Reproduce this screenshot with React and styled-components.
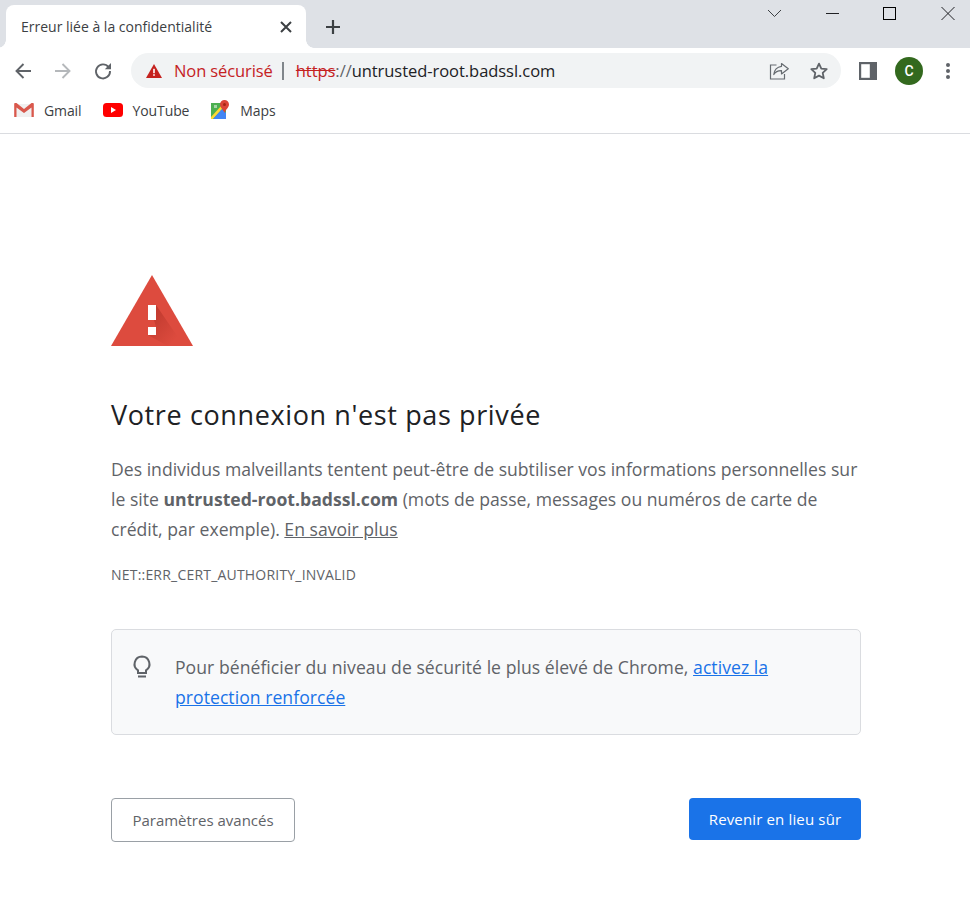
import React from "react";
import styled, { createGlobalStyle } from "styled-components";

const Global = createGlobalStyle`
  html, body { margin: 0; padding: 0; background: #fff; }
  body { font-family: "Open Sans", "Noto Sans", sans-serif; width: 970px; height: 916px; overflow: hidden; }
  * { box-sizing: border-box; }
`;

const Page = styled.div`display: flex; flex-direction: column; width: 970px; height: 916px; background: #fff;`;
const TabStrip = styled.div`display: flex; align-items: flex-end; height: 48px; padding-left: 6px; background: #dee1e6;`;
const Tab = styled.div`
  position: relative; display: flex; align-items: center; justify-content: space-between;
  width: 300px; height: 43px; padding: 0 14px 0 15px; background: #fff; border-radius: 8px 8px 0 0;
  &::before, &::after { content: ""; position: absolute; bottom: 0; width: 8px; height: 8px; background: radial-gradient(circle at var(--cx) 0, #dee1e6 7.5px, #fff 8px); }
  &::before { left: -8px; --cx: 0; }
  &::after { right: -8px; --cx: 100%; }
`;
const TabTitle = styled.span`font-size: 14px; color: #3c4043; white-space: nowrap;`;
const NewTab = styled.div`display: flex; margin: 0 0 11px 17px; width: 20px; height: 20px;`;
const WindowControls = styled.div`display: flex; align-self: flex-start; align-items: center; justify-content: flex-end; gap: 44px; margin-left: auto; padding: 6px 15px 0 0; height: 20px;`;
const Toolbar = styled.div`display: flex; align-items: center; height: 45px; padding-left: 13px; background: #fff;`;
const NavButtons = styled.div`display: flex; align-items: center; gap: 20px; width: 118px;`;
const Omnibox = styled.div`display: flex; align-items: center; width: 710px; height: 35px; padding: 0 12px 0 15px; background: #f1f3f4; border-radius: 18px;`;
const SecurityLabel = styled.span`margin-left: 12px; font-size: 16.5px; letter-spacing: -0.1px; color: #c5221f; white-space: nowrap;`;
const Divider = styled.span`width: 2px; height: 18px; margin: 0 12px 0 9px; background: #80868b;`;
const Url = styled.span`font-size: 16.5px; letter-spacing: -0.05px; color: #202124; white-space: nowrap;`;
const Scheme = styled.span`color: #c5221f; text-decoration: line-through;`;
const Separator = styled.span`color: #5f6368;`;
const OmniActions = styled.div`display: flex; align-items: center; gap: 20px; margin-left: auto;`;
const ToolActions = styled.div`display: flex; align-items: center; margin-left: 18px;`;
const Avatar = styled.div`display: flex; align-items: center; justify-content: center; width: 28px; height: 28px; margin: 0 22px 0 18px; border-radius: 50%; background: #33691e; color: #fff; font: 500 14px Roboto, sans-serif;`;
const BookmarkBar = styled.div`display: flex; align-items: center; gap: 21px; height: 41px; padding: 0 0 6px 14px; background: #fff; border-bottom: 1px solid #dadce0;`;
const Bookmark = styled.div`display: flex; align-items: center; gap: 10px; font-size: 14px; letter-spacing: -0.1px; color: #3c4043;`;
const Main = styled.main`display: flex; flex-direction: column; padding: 141px 109px 0 111px;`;
const Heading = styled.h1`margin: 47px 0 0; font-size: 27px; line-height: 44px; font-weight: 400; letter-spacing: 0.62px; color: #202124; white-space: nowrap;`;
const Paragraph = styled.p`margin: 17px 0 0; font-size: 17.6px; line-height: 30px; color: #5f6368; letter-spacing: 0.01px;`;
const Strong = styled.strong`font-weight: 700;`;
const LearnMore = styled.a`color: #5f6368; text-decoration: underline;`;
const ErrorCode = styled.div`margin-top: 19px; font-size: 14px; line-height: 24px; color: #5f6368; letter-spacing: 0.2px;`;
const Tip = styled.div`display: flex; gap: 23px; margin-top: 42px; height: 106px; padding: 22px 20px 0 20px; background: #f8f9fa; border: 1px solid #dadce0; border-radius: 5px;`;
const TipText = styled.div`font-size: 17.6px; line-height: 30px; color: #5f6368; letter-spacing: 0.04px;`;
const TipLink = styled.a`color: #1a73e8; text-decoration: underline;`;
const Buttons = styled.div`display: flex; justify-content: space-between; align-items: flex-start; margin-top: 63px;`;
const SecondaryButton = styled.button`width: 184px; height: 44px; padding: 0; background: #fff; border: 1px solid #9aa0a6; border-radius: 4px; color: #5f6368; font: 400 15px "Open Sans", sans-serif;`;
const PrimaryButton = styled.button`width: 172px; height: 42px; padding: 0; background: #1a73e8; border: 0; border-radius: 4px; color: #fff; letter-spacing: 0.15px; font: 500 15px "Open Sans", sans-serif;`;

const Svg = styled.svg`display: block; flex: none;`;
const BulbSvg = styled(Svg)`margin-top: 2px;`;

const Close = () => (<Svg width="12" height="12" viewBox="0 0 12 12"><path d="M1 1l10 10M11 1L1 11" stroke="#3c4043" strokeWidth="2" /></Svg>);
const Plus = () => (<Svg width="20" height="20" viewBox="0 0 20 20"><path d="M10 3v14M3 10h14" stroke="#3c4043" strokeWidth="2.2" /></Svg>);
const Chevron = () => (<Svg width="16" height="10" viewBox="0 0 16 10"><path d="M3 2l6.500 6.500L16 2" fill="none" stroke="#3c4043" strokeWidth="1" /></Svg>);
const Minimize = () => (<Svg width="14" height="14" viewBox="0 0 14 14"><path d="M1 7.500h13" stroke="#202124" strokeWidth="1" /></Svg>);
const Maximize = () => (<Svg width="14" height="14" viewBox="0 0 14 14"><rect x="0.500" y="1.500" width="12" height="12" fill="none" stroke="#000" strokeWidth="1" /></Svg>);
const CloseWin = () => (<Svg width="14" height="14" viewBox="0 0 14 14"><path d="M.5 1l13 13M13.500 1L.5 14" stroke="#202124" strokeWidth="1" /></Svg>);
const Back = ({ color }) => (<Svg width="20" height="20" viewBox="0 0 20 20"><path d="M18 10H4M10.500 3L3.500 10l7 7" fill="none" stroke={color} strokeWidth="1.900" /></Svg>);
const Forward = ({ color }) => (<Svg width="20" height="20" viewBox="0 0 20 20"><path d="M2 10h14M9.500 3l7 7-7 7" fill="none" stroke={color} strokeWidth="1.900" /></Svg>);
const Reload = () => (<Svg width="20" height="20" viewBox="0 0 20 20"><path d="M15.600 6.200A7 7 0 1 0 17 10" fill="none" stroke="#5f6368" strokeWidth="1.900" /><path d="M18 2v6.200h-6.200z" fill="#5f6368" /></Svg>);
const WarnSmall = () => (<Svg width="16" height="14" viewBox="0 0 16 14"><path d="M8 0l8 14H0z" fill="#c5221f" /><rect x="7.200" y="4.800" width="1.600" height="4.400" fill="#fff" /><rect x="7.200" y="10.200" width="1.600" height="1.600" fill="#fff" /></Svg>);
const Share = () => (<Svg width="20" height="20" viewBox="0 0 20 20"><path d="M7.500 4H1.500v14h14v-5" fill="none" stroke="#666b70" strokeWidth="1.200" /><path d="M12.500 2.500l6.800 5.200-6.800 5.200V9.700C9 9.600 6.400 10.800 4.800 13.500 5.200 9.300 8 5.700 12.500 5.300z" fill="none" stroke="#666b70" strokeWidth="1.200" strokeLinejoin="round" /></Svg>);
const Star = () => (<Svg width="20" height="20" viewBox="0 0 20 20"><path d="M10 2.600l2.300 5 5.400.6-4 3.700 1.100 5.400L10 14.600l-4.800 2.700 1.100-5.400-4-3.700 5.400-.6z" fill="none" stroke="#5f6368" strokeWidth="1.800" strokeLinejoin="round" /></Svg>);
const SidePanel = () => (<Svg width="18" height="18" viewBox="0 0 18 18"><rect width="18" height="18" fill="#5f6368" /><rect x="2.200" y="2.200" width="8.600" height="13.600" fill="#fff" /></Svg>);
const Dots = () => (<Svg width="6" height="18" viewBox="0 0 6 18"><circle cx="3" cy="3" r="2" fill="#5f6368" /><circle cx="3" cy="9" r="2" fill="#5f6368" /><circle cx="3" cy="15" r="2" fill="#5f6368" /></Svg>);
const Gmail = () => (<Svg width="20" height="16" viewBox="0 0 20 16"><path d="M1 2h18v13H1z" fill="#f0f0f0" /><path d="M1 2l9 7 9-7v2l-9 7-9-7z" fill="#dedede" /><path d="M1 1h1.500L10 7l7.500-6H19q.8 0 .8 1V15h-2.300V5.500L10 11 2.500 5.500V15H.2V2q0-1 .8-1z" fill="#d9584c" /></Svg>);
const YouTube = () => (<Svg width="20" height="14" viewBox="0 0 20 14"><rect width="20" height="14" rx="3.500" fill="#ff0000" /><path d="M8 4l5 3-5 3z" fill="#fff" /></Svg>);
const Maps = () => (
  <Svg width="20" height="20" viewBox="0 0 20 20">
    <path d="M1 3h15v16H1z" fill="#4caf50" />
    <path d="M1 17L12 5l2 2L3 19H1z" fill="#fdd835" />
    <path d="M3 19L12 9l4 4v6z" fill="#4285f4" />
    <path d="M4 5h3v3H4z" fill="#a5d6a7" />
    <path d="M14.500 0a4.500 4.500 0 0 1 4.500 4.500c0 3-3 4.500-4.500 8.500-1.500-4-4.500-5.500-4.500-8.500A4.500 4.500 0 0 1 14.500 0z" fill="#db4437" />
    <circle cx="14.500" cy="4.500" r="1.500" fill="#a52714" />
  </Svg>
);
const WarnLarge = () => (
  <Svg width="82" height="71" viewBox="0 0 82 71">
    <defs>
      <linearGradient id="warnShade" x1="0.1" y1="0.1" x2="0.8" y2="0.8">
        <stop offset="0" stopColor="#a52a20" stopOpacity=".55" />
        <stop offset="1" stopColor="#a52a20" stopOpacity="0" />
      </linearGradient>
    </defs>
    <path d="M41 0l41 71H0z" fill="#dd4b3e" />
    <path d="M45 30l28 41H57L37 60l8-8-2-7z" fill="url(#warnShade)" />
    <rect x="37" y="30" width="8" height="15" fill="#fff" />
    <rect x="37" y="52" width="8" height="8" fill="#fff" />
  </Svg>
);
const Bulb = () => (<BulbSvg width="20" height="26" viewBox="0 0 20 26"><path d="M10 2.500a7.500 7.500 0 0 0-4 13.800V19h8v-2.700a7.500 7.500 0 0 0-4-13.800z" fill="none" stroke="#5f6368" strokeWidth="2" /><rect x="6" y="21.500" width="8" height="2" fill="#5f6368" /></BulbSvg>);

export default function App() {
  return (
    <Page>
      <Global />
      <TabStrip>
        <Tab>
          <TabTitle>Erreur liée à la confidentialité</TabTitle>
          <Close />
        </Tab>
        <NewTab><Plus /></NewTab>
        <WindowControls><Chevron /><Minimize /><Maximize /><CloseWin /></WindowControls>
      </TabStrip>
      <Toolbar>
        <NavButtons>
          <Back color="#5f6368" />
          <Forward color="#b5b8bb" />
          <Reload />
        </NavButtons>
        <Omnibox>
          <WarnSmall />
          <SecurityLabel>Non sécurisé</SecurityLabel>
          <Divider />
          <Url><Scheme>https</Scheme><Separator>://</Separator>untrusted-root.badssl.com</Url>
          <OmniActions><Share /><Star /></OmniActions>
        </Omnibox>
        <ToolActions>
          <SidePanel />
          <Avatar>C</Avatar>
          <Dots />
        </ToolActions>
      </Toolbar>
      <BookmarkBar>
        <Bookmark><Gmail />Gmail</Bookmark>
        <Bookmark><YouTube />YouTube</Bookmark>
        <Bookmark><Maps />Maps</Bookmark>
      </BookmarkBar>
      <Main>
        <WarnLarge />
        <Heading>Votre connexion n'est pas privée</Heading>
        <Paragraph>
          Des individus malveillants tentent peut-être de subtiliser vos informations personnelles sur le site <Strong>untrusted-root.badssl.com</Strong> (mots de passe, messages ou numéros de carte de crédit, par exemple). <LearnMore>En savoir plus</LearnMore>
        </Paragraph>
        <ErrorCode>NET::ERR_CERT_AUTHORITY_INVALID</ErrorCode>
        <Tip>
          <Bulb />
          <TipText>Pour bénéficier du niveau de sécurité le plus élevé de Chrome, <TipLink>activez la protection renforcée</TipLink></TipText>
        </Tip>
        <Buttons>
          <SecondaryButton>Paramètres avancés</SecondaryButton>
          <PrimaryButton>Revenir en lieu sûr</PrimaryButton>
        </Buttons>
      </Main>
    </Page>
  );
}
